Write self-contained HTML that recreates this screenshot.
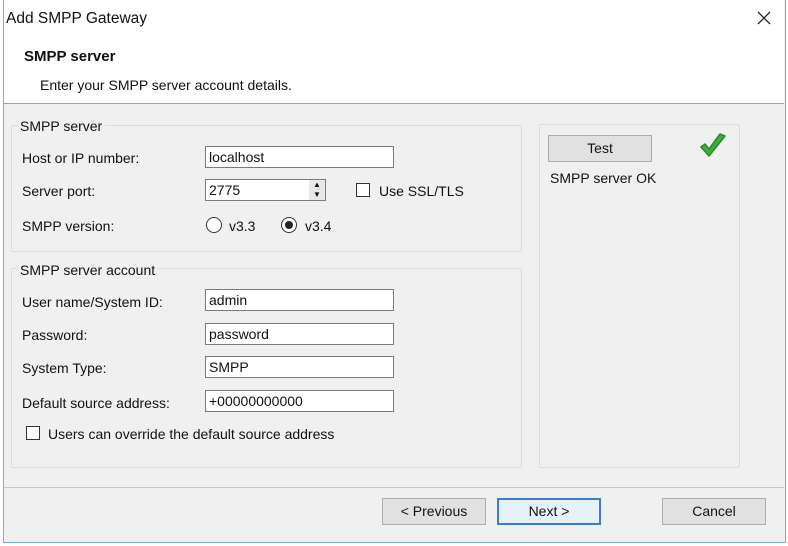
<!DOCTYPE html><html><head><style>
body{margin:0;width:788px;height:546px;background:#fff;font-family:"Liberation Sans",sans-serif;font-size:14px;color:#111;position:relative;overflow:hidden}
.a{position:absolute}
.win{left:3px;top:0;width:781px;height:542px;border:1px solid #7fa9d6;border-top:none;background:#f0f0f0}
.hdr{left:4px;top:0;width:780px;height:103px;background:#fff;border-bottom:1px solid #a0a0a0}
.grp{border:1px solid #dcdcdc;border-radius:2px}
.lg{background:#f0f0f0;padding:0 3px}
.in{background:#fff;border:1px solid #7a7a7a;height:22px;box-sizing:border-box;padding:2px 3px;font-size:14px}
.btn{background:#e1e1e1;border:1px solid #adadad;box-sizing:border-box;text-align:center;font-size:14px}
.cb{width:14px;height:14px;border:1px solid #333;background:#fff;box-sizing:border-box}
.rb{width:16px;height:16px;border:1px solid #333;border-radius:50%;background:#fff;box-sizing:border-box}
</style></head><body>
<div class="a win"></div>
<div class="a hdr"></div>
<div class="a" style="left:6px;top:10px;font-size:15.5px">Add SMPP Gateway</div>
<svg class="a" style="left:757px;top:11px" width="14" height="14" viewBox="0 0 14 14"><path d="M1 1L13 13M13 1L1 13" stroke="#222" stroke-width="1.3"/></svg>
<div class="a" style="left:24px;top:48px;font-weight:bold;font-size:15px">SMPP server</div>
<div class="a" style="left:40px;top:77px;font-size:14px">Enter your SMPP server account details.</div>

<div class="a grp" style="left:11px;top:125px;width:509px;height:125px"></div>
<div class="a lg" style="left:17px;top:118px">SMPP server</div>
<div class="a" style="left:22px;top:150px">Host or IP number:</div>
<div class="a in" style="left:205px;top:146px;width:189px">localhost</div>
<div class="a" style="left:22px;top:183px">Server port:</div>
<div class="a in" style="left:205px;top:179px;width:121px">2775</div>
<div class="a" style="left:309px;top:180px;width:16px;height:20px;background:#e8e8e8;font-size:8px;line-height:10px;text-align:center">▲<br>▼</div>
<div class="a cb" style="left:356px;top:183px"></div>
<div class="a" style="left:379px;top:183px">Use SSL/TLS</div>
<div class="a" style="left:22px;top:218px">SMPP version:</div>
<div class="a rb" style="left:206px;top:217px"></div>
<div class="a" style="left:229px;top:218px">v3.3</div>
<div class="a rb" style="left:281px;top:217px"></div>
<div class="a" style="left:285px;top:221px;width:8px;height:8px;border-radius:50%;background:#222"></div>
<div class="a" style="left:305px;top:218px">v3.4</div>

<div class="a grp" style="left:11px;top:268px;width:509px;height:198px"></div>
<div class="a lg" style="left:17px;top:262px">SMPP server account</div>
<div class="a" style="left:22px;top:294px">User name/System ID:</div>
<div class="a in" style="left:205px;top:289px;width:189px">admin</div>
<div class="a" style="left:22px;top:327px">Password:</div>
<div class="a in" style="left:205px;top:323px;width:189px">password</div>
<div class="a" style="left:22px;top:360px">System Type:</div>
<div class="a in" style="left:205px;top:356px;width:189px">SMPP</div>
<div class="a" style="left:22px;top:395px">Default source address:</div>
<div class="a in" style="left:205px;top:390px;width:189px">+00000000000</div>
<div class="a cb" style="left:26px;top:426px"></div>
<div class="a" style="left:48px;top:426px">Users can override the default source address</div>

<div class="a grp" style="left:539px;top:124px;width:199px;height:342px"></div>
<div class="a btn" style="left:548px;top:135px;width:104px;height:27px;line-height:25px">Test</div>
<svg class="a" style="left:698px;top:132px" width="30" height="28" viewBox="0 0 30 28"><path d="M3 15 L11 24 L27 4 L22 2 L11 17 L7 12 Z" fill="#3cae3c" stroke="#2a8a2a" stroke-width="1.5" stroke-linejoin="round"/></svg>
<div class="a" style="left:550px;top:170px">SMPP server OK</div>

<div class="a" style="left:4px;top:487px;width:780px;border-top:1px solid #c8c8c8"></div>
<div class="a btn" style="left:382px;top:498px;width:104px;height:27px;line-height:25px">&lt; Previous</div>
<div class="a btn" style="left:497px;top:498px;width:104px;height:27px;line-height:23px;border:2px solid #3c7fc8;background:#e5f1fb">Next &gt;</div>
<div class="a btn" style="left:662px;top:498px;width:104px;height:27px;line-height:25px">Cancel</div>
</body></html>
